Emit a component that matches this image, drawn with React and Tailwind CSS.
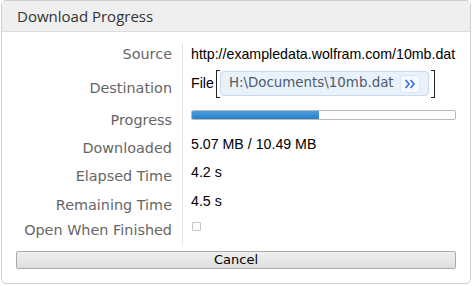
export default function App() {
  const label = "text-right pr-[10px] text-[#666] text-[14.4px] leading-[17px] [font-family:'DejaVu_Sans',sans-serif]";
  const value = "pl-[8px] text-black text-[14.2px] leading-[17px] [font-family:'Liberation_Sans',Arial,sans-serif]";

  return (
    <div className="w-[474px] h-[286px] bg-white">
      <div className="w-[470px] h-[284px] ml-[1px] border border-[#cfcfcf] rounded-[5px] overflow-hidden flex flex-col bg-white">
        {/* TITLE */}
        <div className="h-[31px] shrink-0 bg-[#efefef] border-b border-[#dcdcdc] pl-[15px] flex items-center text-[15px] text-[#333] [font-family:'Open_Sans',sans-serif]">
          Download Progress
        </div>

        {/* FIELDS */}
        <div className="grid grid-cols-[181px_1fr] items-start mt-[12px]">
          <div className="border-r border-[#e3e3e3] flex flex-col pt-[2px] pb-[6px]">
            <div className={label}>Source</div>
            <div className={label + " mt-[17px]"}>Destination</div>
            <div className={label + " mt-[15px]"}>Progress</div>
            <div className={label + " mt-[11px]"}>Downloaded</div>
            <div className={label + " mt-[11px]"}>Elapsed Time</div>
            <div className={label + " mt-[12px]"}>Remaining Time</div>
            <div className={label + " mt-[8px]"}>Open When Finished</div>
          </div>

          <div className="flex flex-col pt-[2px]">
            <div className={value}>http://exampledata.wolfram.com/10mb.dat</div>

            <div className="pl-[8px] mt-[6px] flex items-center h-[29px]">
              <span className="text-black text-[14.2px] [font-family:'Liberation_Sans',Arial,sans-serif]">File</span>
              <div className="ml-[2px] w-[4px] h-[28px] border-l border-y border-[#222]" />
              <div className="h-[25px] w-[209px] rounded-[4px] bg-[#e9f1fb] border border-[#c9d9ee] flex items-center pl-[8px] pr-[8px]">
                <span className="text-[#4d5a6b] text-[13.4px] [font-family:'DejaVu_Sans',sans-serif]">H:\Documents\10mb.dat</span>
                <span className="ml-auto w-[20px] h-[18px] rounded-[2px] bg-[#f5f8fd] border border-[#dde7f4] flex items-center justify-center">
                  <svg width="12" height="10" viewBox="0 0 12 10">
                    <path d="M1.5 1 L5 5 L1.5 9" fill="none" stroke="#2f6ee0" strokeWidth="1.6" />
                    <path d="M6.5 1 L10 5 L6.5 9" fill="none" stroke="#2f6ee0" strokeWidth="1.6" />
                  </svg>
                </span>
              </div>
              <div className="ml-[2px] w-[4px] h-[28px] border-r border-y border-[#222]" />
            </div>

            <div className="pl-[8px] mt-[12px]">
              <div className="w-[265px] h-[10px] rounded-[2px] border border-[#b9b9b9] bg-white overflow-hidden">
                <div className="h-full w-[127px] bg-gradient-to-b from-[#4a9ee0] to-[#2a7fc4]" />
              </div>
            </div>

            <div className={value + " mt-[16px]"}>5.07 MB / 10.49 MB</div>
            <div className={value + " mt-[11px]"}>4.2 s</div>
            <div className={value + " mt-[12px]"}>4.5 s</div>
            <div className="pl-[9px] mt-[12px]">
              <div className="w-[9px] h-[9px] border border-[#c4c4c4] bg-white rounded-[1px]" />
            </div>
          </div>
        </div>

        {/* CANCEL */}
        <div className="px-[14px] mt-[1px]">
          <button className="w-full h-[18px] rounded-[2px] border border-[#a9a9a9] bg-gradient-to-b from-[#efefef] to-[#dedede] text-black text-[13px] leading-[16px] [font-family:'DejaVu_Sans',sans-serif]">
            Cancel
          </button>
        </div>
      </div>
    </div>
  );
}
